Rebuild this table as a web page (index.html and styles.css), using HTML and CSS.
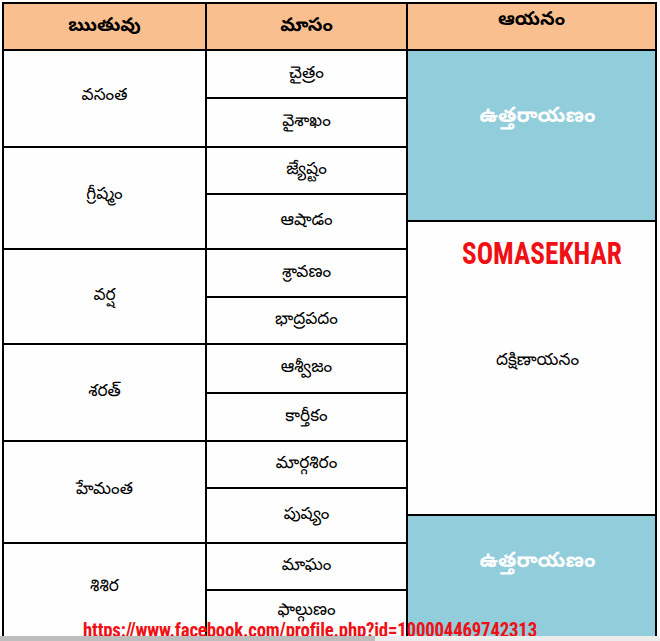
FILE: index.html
```html
<!DOCTYPE html>
<html lang="te">
<head>
<meta charset="utf-8">
<title>ఋతువులు</title>
<link rel="stylesheet" href="styles.css">
</head>
<body>
<div class="sheet">
  <div class="hd c1">ఋతువు</div>
  <div class="hd c2">మాసం</div>
  <div class="hd c3 up">ఆయనం</div>

  <div class="cell season r1">వసంత</div>
  <div class="cell month m46">చైత్రం</div>
  <div class="ayanam">
    <div class="ay blue b1">ఉత్తరాయణం</div>
    <div class="ay white">
      <div class="brand">SOMASEKHAR</div>
      <div class="dak">దక్షిణాయనం</div>
    </div>
    <div class="ay blue b2">ఉత్తరాయణం</div>
  </div>
  <div class="cell month">వైశాఖం</div>

  <div class="cell season r2">గ్రీష్మం</div>
  <div class="cell month">జ్యేష్టం</div>
  <div class="cell month">ఆషాడం</div>

  <div class="cell season r3">వర్ష</div>
  <div class="cell month">శ్రావణం</div>
  <div class="cell month">భాద్రపదం</div>

  <div class="cell season r4">శరత్</div>
  <div class="cell month">ఆశ్వీజం</div>
  <div class="cell month">కార్తీకం</div>

  <div class="cell season r5">హేమంత</div>
  <div class="cell month">మార్గశిరం</div>
  <div class="cell month">పుష్యం</div>

  <div class="cell season r6">శిశిర</div>
  <div class="cell month">మాఘం</div>
  <div class="cell month last">ఫాల్గుణం</div>
</div>
<div class="url">https://www.facebook.com/profile.php?id=100004469742313</div>
<div class="scroll"><div class="thumb"></div></div>
</body>
</html>
```

FILE: styles.css
```css
html, body {
  margin: 0;
  padding: 0;
  overflow: hidden;
  background: #fdfefd;
  height: 641px;
}
body {
  font-family: "Noto Sans Telugu", "Lohit Telugu", "Gautami", "Noto Sans", "DejaVu Sans", sans-serif;
  color: #000;
}
.sheet {
  margin: 2px 0 0 2px;
  width: 651px;
  display: grid;
  grid-template-columns: 201px 199px 247px;
  grid-template-rows: 45px 46px 47px 45px 53px 46px 45px 47px 46px 45px 53px 45px 60px;
  gap: 2px;
  padding: 2px;
  background: #000;
}
.hd {
  background: #fabf8f;
  font-weight: bold;
  font-size: 19px;
  display: flex;
  align-items: center;
  justify-content: center;
}
.hd.up { padding-bottom: 12px; }
.cell {
  background: #fdfefd;
  display: flex;
  align-items: center;
  justify-content: center;
  font-size: 16px;
}
.season { grid-column: 1; font-size: 17px; }
.r1 { grid-row: 2 / span 2; padding-bottom: 4px; }
.r2 { grid-row: 4 / span 2; padding-bottom: 6px; }
.r3 { grid-row: 6 / span 2; }
.r4 { grid-row: 8 / span 2; }
.r5 { grid-row: 10 / span 2; padding-bottom: 4px; }
.r6 { grid-row: 12 / span 2; padding-bottom: 20px; }
.month { grid-column: 2; font-size: 17px; }
.month.last { align-items: flex-start; padding-top: 9px; }
.ayanam {
  grid-column: 3;
  grid-row: 2 / span 12;
  display: flex;
  flex-direction: column;
  gap: 2px;
  background: #000;
}
.ay {
  display: flex;
  flex-direction: column;
  align-items: center;
}
.blue {
  background: #92cddc;
  color: #fdfefd;
  font-weight: bold;
  font-size: 21px;
  padding-left: 12px;
}
.b1 { height: 169px; padding-top: 53px; box-sizing: border-box; }
.b2 { flex: 1; padding-top: 33px; }
.white {
  background: #fdfefd;
  height: 292px;
  font-size: 17px;
}
.brand {
  margin-top: 14px;
  margin-left: 20px;
  font-family: "Liberation Sans Narrow", "Roboto Condensed", "Liberation Sans", sans-serif;
  font-weight: bold;
  font-size: 31px;
  line-height: 36px;
  color: #f00f14;
  transform: scaleX(0.88);
}
.dak { margin-top: 78px; margin-left: 12px; }
.url {
  position: absolute;
  left: 83px;
  top: 618px;
  font-family: "Liberation Sans Narrow", "Roboto Condensed", "Liberation Sans", sans-serif;
  font-weight: bold;
  font-size: 20px;
  line-height: 24px;
  color: #f00f14;
  letter-spacing: -0.2px;
  white-space: nowrap;
  transform: scaleX(0.94);
  transform-origin: left center;
}
.scroll {
  position: absolute;
  left: 0;
  right: 0;
  top: 636px;
  height: 5px;
  background: #ececec;
}
.thumb {
  width: 375px;
  height: 100%;
  background: #bdbdbd;
}
```
